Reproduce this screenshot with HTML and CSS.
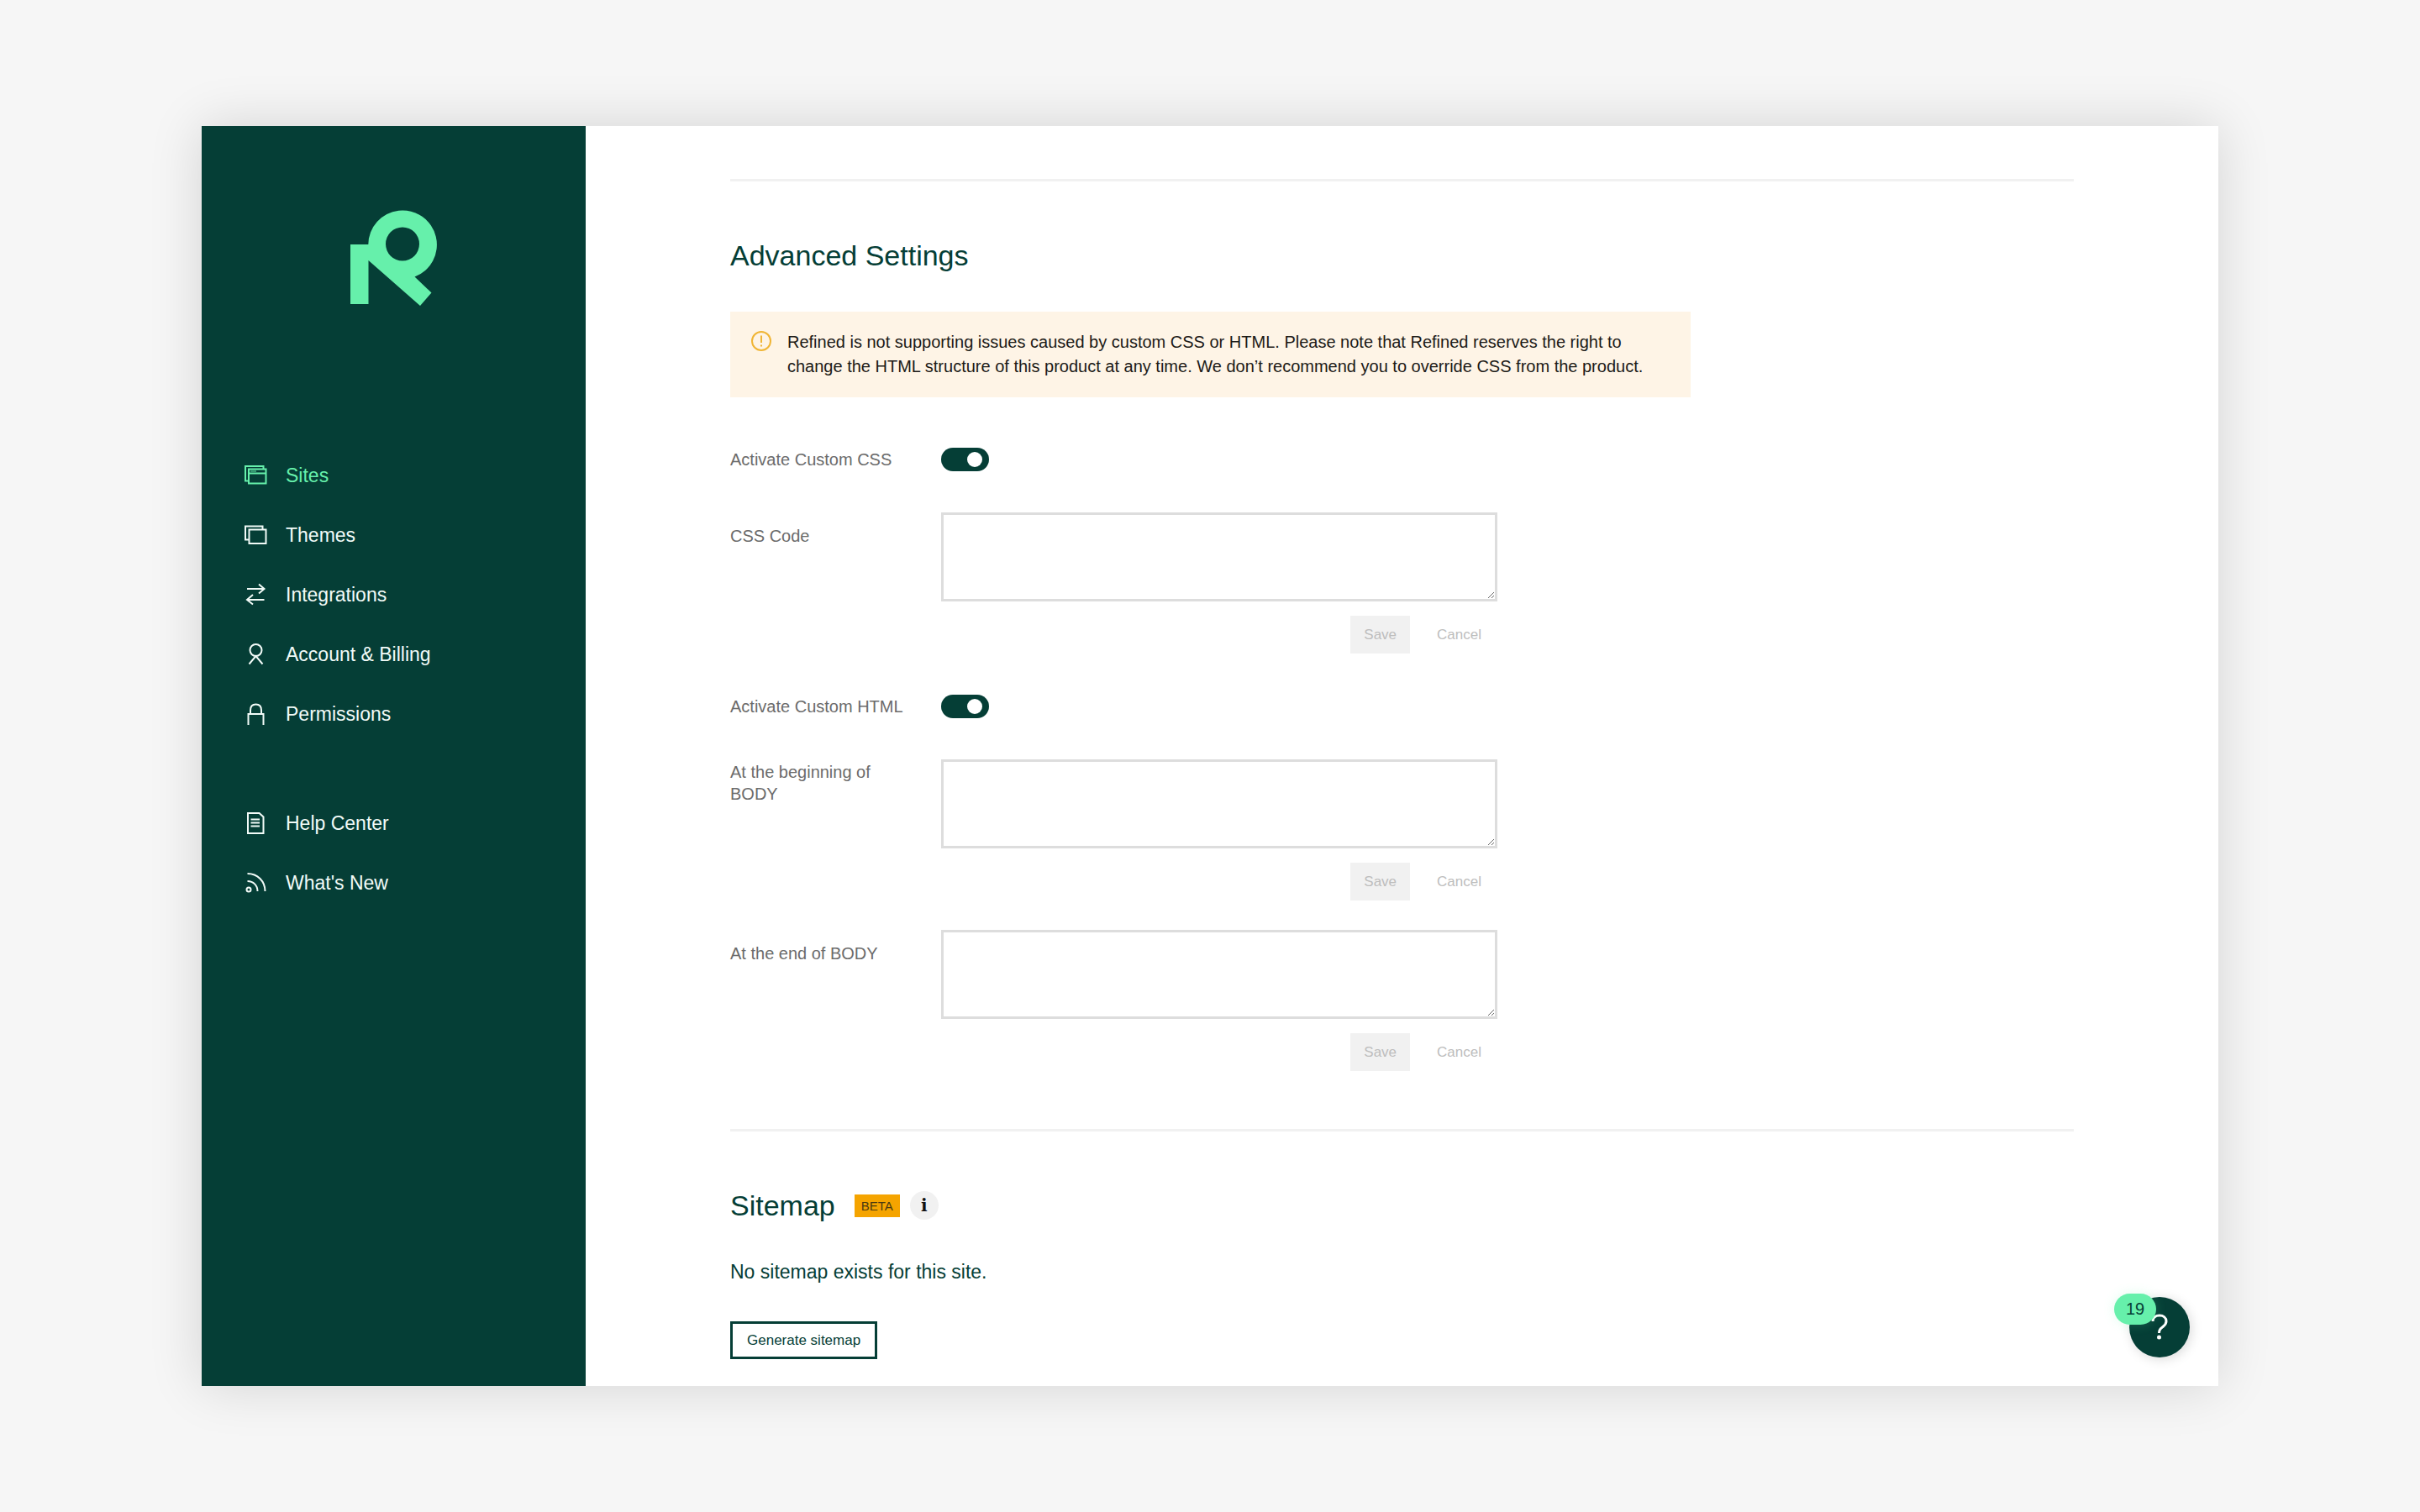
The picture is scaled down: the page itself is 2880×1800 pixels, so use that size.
FILE: index.html
```html
<!DOCTYPE html>
<html lang="en">
<head>
<meta charset="utf-8">
<title>Advanced Settings</title>
<meta name="viewport" content="width=device-width, initial-scale=1">
<link rel="stylesheet" href="styles.css">
</head>
<body>
<div class="window">
  <aside class="sidebar">
    <a class="logo" href="#" aria-label="Refined">
      <svg width="104" height="114" viewBox="0 0 104 114" fill="currentColor">
        <path fill-rule="evenodd" d="M0 41H21.300A40.800 40.800 0 1 1 76.500 79.500L96.500 98.500L83 114L21.500 60V112H0ZM62 20.500a20 20 0 1 0 0 40a20 20 0 1 0 0-40Z"/>
      </svg>
    </a>
    <nav class="nav" aria-label="Main">
      <ul class="nav-group">
        <li><a class="nav-link active" href="#">
          <svg class="icon" viewBox="0 0 28 28"><path d="M5.500 19.500H2V2H23.500V5"/><path d="M6 5.500H26.500V22.500H6ZM6 10.500H26.500"/><path class="faint" d="M8 8H15"/></svg>
          Sites</a></li>
        <li><a class="nav-link" href="#">
          <svg class="icon" viewBox="0 0 28 28"><path d="M6 18.500H2V2.500H22.500V6"/><path d="M6.500 6.500H26.500V23H6.500Z"/></svg>
          Themes</a></li>
        <li><a class="nav-link" href="#">
          <svg class="icon" viewBox="0 0 28 28"><path d="M4 6H24.500M18 0.500L24.500 6L18 11.500M24.500 19H4M11 13L4 19L11 24.500"/></svg>
          Integrations</a></li>
        <li><a class="nav-link" href="#">
          <svg class="icon" viewBox="0 0 28 28"><circle cx="14.500" cy="8" r="7"/><path d="M6.500 24.500L14.500 15L22.500 24.500"/></svg>
          Account &amp; Billing</a></li>
        <li><a class="nav-link" href="#">
          <svg class="icon" viewBox="0 0 28 28"><path d="M5.500 26V13H23.500V26M8 13V8.500C8 4 10.500 1.500 14.500 1.500S21 4 21 8.500V13"/></svg>
          Permissions</a></li>
      </ul>
      <ul class="nav-group">
        <li><a class="nav-link" href="#">
          <svg class="icon" viewBox="0 0 28 28"><path d="M5 1H18.500L23.500 5.500V25H5ZM8.500 8.500H19M8.500 12.500H19M8.500 16.500H19"/></svg>
          Help Center</a></li>
        <li><a class="nav-link" href="#">
          <svg class="icon" viewBox="0 0 28 28"><path d="M4.500 2C16.500 2 25.500 11 25.500 23M4.500 11C11.500 11 16.500 16 16.500 23"/><circle cx="6" cy="21" r="2.500"/></svg>
          What's New</a></li>
      </ul>
    </nav>
  </aside>

  <main class="content">
    <section class="section">
      <h2 class="title">Advanced Settings</h2>
      <div class="notice">
        <svg class="notice-icon" viewBox="0 0 24 24"><circle cx="12" cy="12" r="11"/><path d="M12 5.500V14M12 16.500V18.500"/></svg>
        <p>Refined is not supporting issues caused by custom CSS or HTML. Please note that Refined reserves the right to change the HTML structure of this product at any time. We don’t recommend you to override CSS from the product.</p>
      </div>

      <div class="row">
        <label for="css-on">Activate Custom CSS</label>
        <input class="toggle" id="css-on" type="checkbox" role="switch" checked>
      </div>
      <form class="row editor">
        <label class="code-label" for="css-code">CSS Code</label>
        <div class="field">
          <textarea class="code" id="css-code"></textarea>
          <div class="actions">
            <button class="button save" type="submit" disabled>Save</button>
            <button class="button cancel" type="reset" disabled>Cancel</button>
          </div>
        </div>
      </form>

      <div class="row">
        <label for="html-on">Activate Custom HTML</label>
        <input class="toggle" id="html-on" type="checkbox" role="switch" checked>
      </div>
      <form class="row editor">
        <label class="code-label" for="body-start">At the beginning of BODY</label>
        <div class="field">
          <textarea class="code" id="body-start"></textarea>
          <div class="actions">
            <button class="button save" type="submit" disabled>Save</button>
            <button class="button cancel" type="reset" disabled>Cancel</button>
          </div>
        </div>
      </form>
      <form class="row editor follow">
        <label class="code-label" for="body-end">At the end of BODY</label>
        <div class="field">
          <textarea class="code" id="body-end"></textarea>
          <div class="actions">
            <button class="button save" type="submit" disabled>Save</button>
            <button class="button cancel" type="reset" disabled>Cancel</button>
          </div>
        </div>
      </form>
    </section>

    <section class="section">
      <div class="title-row">
        <h2 class="title">Sitemap</h2>
        <span class="beta">BETA</span>
        <button class="info" type="button" aria-label="About the sitemap">i</button>
      </div>
      <p class="status">No sitemap exists for this site.</p>
      <button class="button outline" type="button">Generate sitemap</button>
    </section>
  </main>

  <div class="help">
    <button class="help-button" type="button" aria-label="Help">
      <svg width="20" height="32" viewBox="0 0 20 32"><path d="M2 9C2 4.500 5.500 2 10 2S18 4.500 18 9C18 12 16.500 13.500 14 15.500C11 18 9.500 19 9.500 23"/><circle cx="9.500" cy="28" r="2.500"/></svg>
    </button>
    <span class="help-count">19</span>
  </div>
</div>
</body>
</html>
```
FILE: styles.css
```css
:root {
  --dark: #053e36;
  --mint: #66f0ab;
  --line: #f1f1f1;
}

* {
  box-sizing: border-box;
}

body {
  display: flex;
  min-height: 100vh;
  margin: 0;
  padding: 150px 240px;
  background: #f6f6f6;
  color: var(--dark);
  font: 20px/26px "Liberation Sans", Arial, sans-serif;
}

h2, p, ul {
  margin: 0;
  padding: 0;
  font-weight: 400;
  list-style: none;
}

button, textarea {
  font-family: inherit;
}

.window {
  position: relative;
  display: flex;
  flex: 1;
  background: #fff;
  box-shadow: 0 0 60px rgba(0, 0, 0, 0.14);
}

/* Sidebar */
.sidebar {
  display: flex;
  flex: 0 0 457px;
  flex-direction: column;
  gap: 167px;
  padding-top: 100px;
  background: var(--dark);
}

.logo {
  align-self: center;
  height: 114px;
  color: var(--mint);
}

.nav {
  display: flex;
  flex-direction: column;
  gap: 59px;
  padding-left: 50px;
}

.nav-link {
  display: flex;
  align-items: center;
  gap: 22px;
  color: #f2fbf8;
  font-size: 23px;
  line-height: 71px;
  text-decoration: none;
}

.nav-link.active {
  color: var(--mint);
}

.icon {
  width: 28px;
  height: 28px;
  overflow: visible;
  fill: none;
  stroke: currentColor;
  stroke-width: 2;
}

.faint {
  opacity: 0.5;
}

/* Settings */
.content {
  flex: 1;
  padding: 63px 172px 31px;
}

.section {
  padding-top: 68px;
  border-top: 3px solid var(--line);
}

.section + .section {
  margin-top: 69px;
}

.title {
  font-size: 34px;
  line-height: 40px;
}

.notice {
  display: flex;
  gap: 19px;
  max-width: 1143px;
  margin: 47px 0 60px;
  padding: 22px 48px 22px 25px;
  background: #fef4e6;
  color: #1c1a17;
  line-height: 29px;
}

.notice-icon {
  flex: none;
  width: 24px;
  height: 24px;
  margin-top: 1px;
  fill: none;
  stroke: #f0b535;
  stroke-width: 2;
}

.row {
  display: grid;
  grid-template-columns: 251px minmax(0, 662px);
  align-items: center;
  color: #6b6b6b;
}

.editor {
  align-items: start;
  margin: 49px 0;
}

.editor.follow {
  margin: -14px 0 0;
}

.code-label {
  display: flex;
  align-items: center;
  min-height: 56px;
  padding-right: 40px;
}

.toggle {
  display: flex;
  align-items: center;
  justify-content: flex-end;
  width: 57px;
  height: 28px;
  margin: 0;
  padding: 0 8px;
  border-radius: 14px;
  background: var(--dark);
  appearance: none;
}

.toggle::before {
  width: 18px;
  height: 18px;
  border-radius: 50%;
  background: #fff;
  content: "";
}

.toggle:not(:checked) {
  justify-content: flex-start;
  background: #bbb;
}

.code {
  display: block;
  width: 100%;
  height: 106px;
  padding: 12px;
  border: 3px solid #ddd;
  background: #fff;
  font-size: 20px;
  resize: vertical;
}

.actions {
  display: flex;
  justify-content: flex-end;
  gap: 13px;
  margin-top: 17px;
}

.button {
  height: 45px;
  border: 0;
  background: none;
  color: var(--dark);
  font-size: 17px;
}

.button.save {
  padding: 0 16px;
  background: #f1f1f1;
  color: #bdbdbd;
}

.button.cancel {
  padding: 0 19px;
  color: #bdbdbd;
}

.button.outline {
  padding: 0 17px;
  border: 3px solid var(--dark);
}

/* Sitemap */
.title-row {
  display: flex;
  align-items: center;
}

.beta {
  margin: 0 12px 0 23px;
  padding: 0 8px;
  background: #f5a400;
  color: #4a3a12;
  font-size: 15px;
  line-height: 27px;
}

.info {
  width: 34px;
  height: 34px;
  padding: 0;
  border: 0;
  border-radius: 50%;
  background: #f1f1f1;
  color: #111;
  font: 700 20px/34px "DejaVu Serif", serif;
}

.status {
  margin: 46px 0;
  font-size: 23px;
}

/* Floating help */
.help {
  position: absolute;
  right: 34px;
  bottom: 34px;
}

.help-button {
  display: flex;
  align-items: center;
  justify-content: center;
  width: 72px;
  height: 72px;
  padding: 0;
  border: 0;
  border-radius: 50%;
  background: var(--dark);
  box-shadow: 2px 2px 14px rgba(0, 0, 0, 0.15);
}

.help-button svg {
  fill: #fff;
}

.help-button path {
  fill: none;
  stroke: #fff;
  stroke-width: 3;
}

.help-count {
  position: absolute;
  top: -4px;
  left: -18px;
  width: 50px;
  border-radius: 19px;
  background: var(--mint);
  box-shadow: 0 0 14px rgba(102, 240, 171, 0.2);
  line-height: 37px;
  text-align: center;
}
```
